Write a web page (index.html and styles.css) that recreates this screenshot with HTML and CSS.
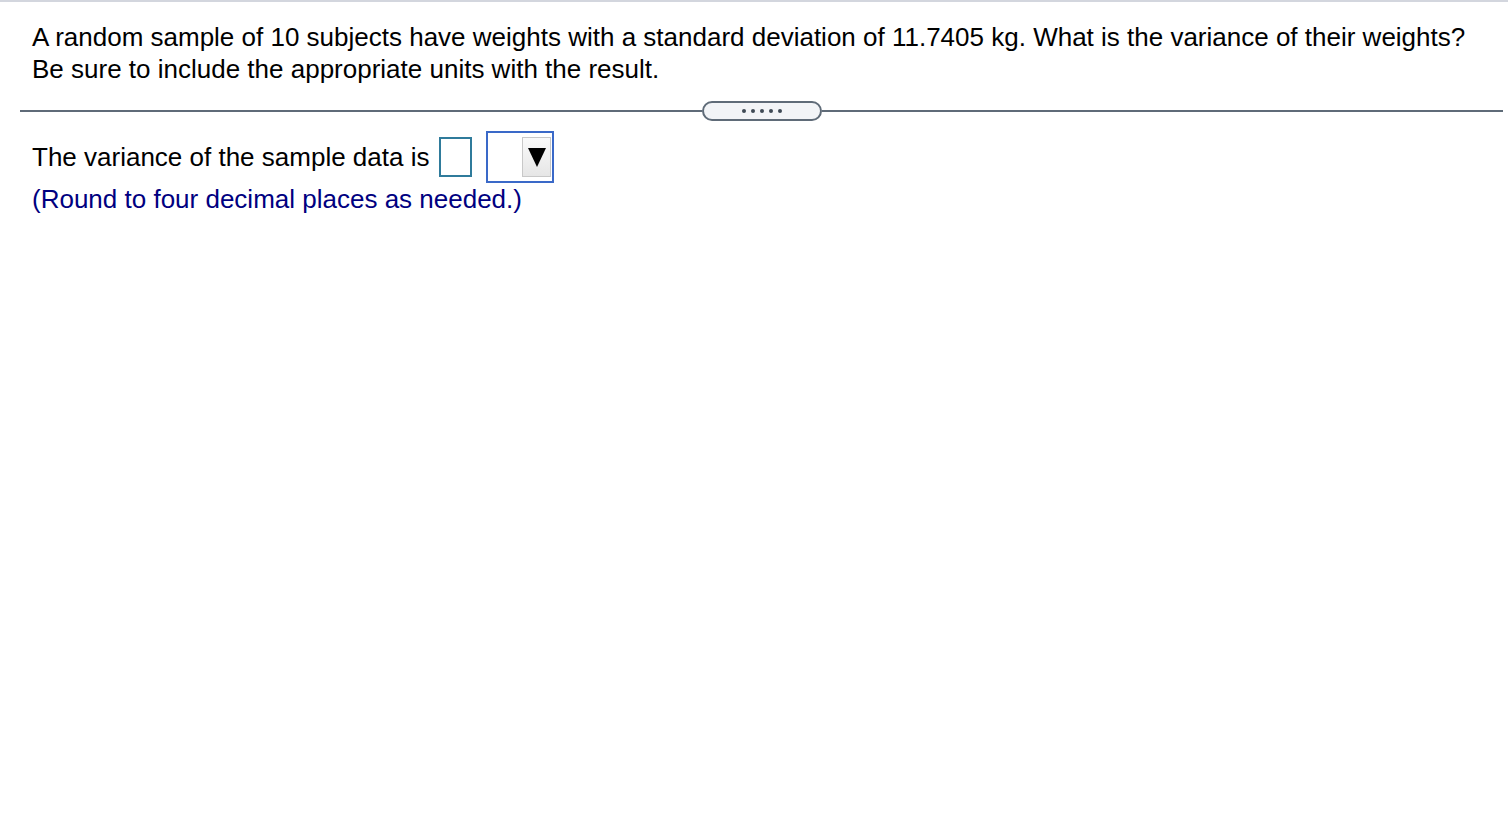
FILE: index.html
```html
<!DOCTYPE html>
<html>
<head>
<meta charset="utf-8">
<link rel="stylesheet" href="styles.css">
</head>
<body>
<div class="page">
  <div class="question">
    <p class="q-text">A random sample of 10 subjects have weights with a standard deviation of 11.7405 kg. What is the variance of their weights? Be sure to include the appropriate units with the result.</p>
  </div>
  <div class="divider">
    <div class="rule"></div>
    <div class="pill"><span class="dot"></span><span class="dot"></span><span class="dot"></span><span class="dot"></span><span class="dot"></span></div>
    <div class="rule"></div>
  </div>
  <div class="answer">
    <div class="answer-line">
      <span class="label">The variance of the sample data is</span>
      <span class="input-box"></span>
      <span class="select-box"><span class="select-btn"><svg width="20" height="22" viewBox="0 0 20 22"><polygon points="1,2 19,2 10,21" fill="#000"/></svg></span></span>
    </div>
    <div class="hint">(Round to four decimal places as needed.)</div>
  </div>
</div>
</body>
</html>
```
FILE: styles.css
```css
html, body {
  margin: 0;
  padding: 0;
  background: #fff;
}
body {
  font-family: "Liberation Sans", Arial, sans-serif;
  color: #000;
}
.page {
  border-top: 2px solid #d3d6de;
  min-height: 824px;
}
.question {
  padding: 19px 32px 0 32px;
}
.q-text {
  margin: 0;
  font-size: 26px;
  line-height: 32px;
}
.divider {
  display: flex;
  align-items: center;
  margin: 15px 5px 0 20px;
  height: 22px;
}
.rule {
  flex: 1;
  height: 2px;
  background: #5f6b78;
}
.pill {
  width: 116px;
  height: 16px;
  border: 2px solid #5f6b78;
  border-radius: 11px;
  background: #f2f4f7;
  display: flex;
  justify-content: center;
  align-items: center;
  gap: 5px;
}
.dot {
  width: 4px;
  height: 4px;
  border-radius: 50%;
  background: #3f4a56;
}
.answer {
  padding: 9px 32px 0 32px;
}
.answer-line {
  display: flex;
  align-items: center;
  height: 52px;
}
.label {
  font-size: 26px;
}
.input-box {
  display: inline-block;
  width: 29px;
  height: 36px;
  border: 2px solid #2f7b9b;
  margin-left: 10px;
}
.select-box {
  display: inline-flex;
  justify-content: flex-end;
  align-items: center;
  width: 64px;
  height: 48px;
  border: 2px solid #3a69c8;
  margin-left: 14px;
}
.select-btn {
  width: 27px;
  height: 38px;
  margin-right: 1px;
  border: 1px solid #c8c8c8;
  background: linear-gradient(#fafafa, #e6e6e6);
  display: flex;
  justify-content: center;
  align-items: center;
}
.hint {
  color: #000080;
  font-size: 26px;
  line-height: 32px;
}
```
